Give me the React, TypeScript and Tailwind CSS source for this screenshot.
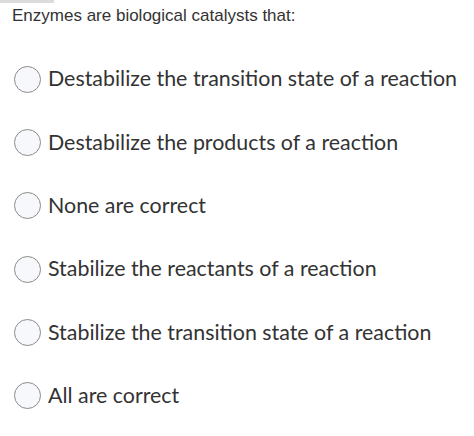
const options = [
  'Destabilize the transition state of a reaction',
  'Destabilize the products of a reaction',
  'None are correct',
  'Stabilize the reactants of a reaction',
  'Stabilize the transition state of a reaction',
  'All are correct',
];

export default function App() {
  return (
    <div className="relative w-[474px] h-[436px] bg-white overflow-hidden">
      <div className="absolute left-0 top-0 h-[3px] w-[54px] bg-[#dcdcdc]" />
      <p className="pl-[12px] pt-[6px] text-[17px] leading-[20px] text-[#333] font-['Liberation_Sans',Arial,sans-serif]">
        Enzymes are biological catalysts that:
      </p>
      <ul className="mt-[21.5px] flex flex-col font-['Lato',sans-serif] text-[#333]">
        {options.map((opt) => (
          <li key={opt} className="flex h-[63.3px] items-center gap-[7px] pl-[14px]">
            <span className="h-[27px] w-[27px] shrink-0 rounded-full border border-[#8a8a8a] bg-[#f6f8fc]" />
            <span className="text-[21.4px] leading-none">{opt}</span>
          </li>
        ))}
      </ul>
    </div>
  );
}
